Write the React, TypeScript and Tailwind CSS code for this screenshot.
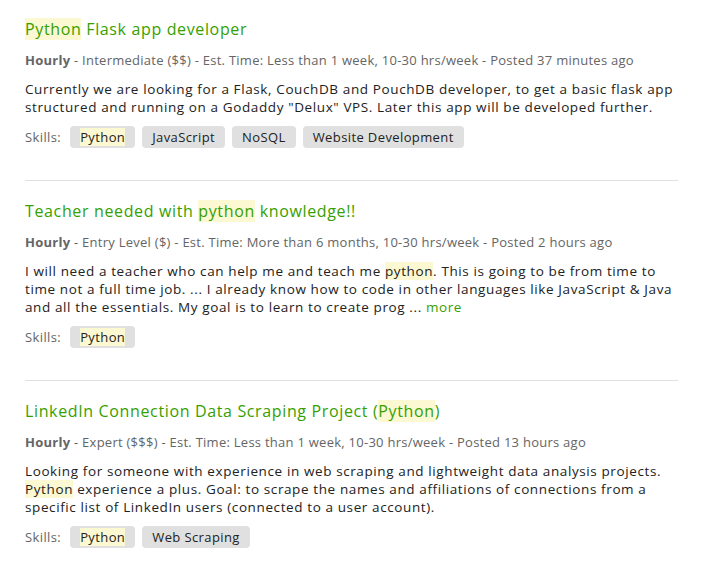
import type { ReactNode } from 'react'

type Job = {
  title: ReactNode
  level: string
  time: string
  posted: string
  body: ReactNode
  skills: { name: string; hit?: boolean }[]
}

function Hl({ children }: { children: ReactNode }) {
  return <span className="bg-[#fbf8d2]">{children}</span>
}

const JOBS: Job[] = [
  {
    title: (
      <>
        <Hl>Python</Hl> Flask app developer
      </>
    ),
    level: 'Intermediate ($$)',
    time: 'Less than 1 week, 10-30 hrs/week',
    posted: '37 minutes ago',
    body: (
      <>
        Currently we are looking for a Flask, CouchDB and PouchDB developer, to get a basic flask app
        <br />
        structured and running on a Godaddy "Delux" VPS. Later this app will be developed further.
      </>
    ),
    skills: [
      { name: 'Python', hit: true },
      { name: 'JavaScript' },
      { name: 'NoSQL' },
      { name: 'Website Development' },
    ],
  },
  {
    title: (
      <>
        Teacher needed with <Hl>python</Hl> knowledge!!
      </>
    ),
    level: 'Entry Level ($)',
    time: 'More than 6 months, 10-30 hrs/week',
    posted: '2 hours ago',
    body: (
      <>
        I will need a teacher who can help me and teach me <Hl>python</Hl>. This is going to be from time to
        <br />
        time not a full time job. ... I already know how to code in other languages like JavaScript &amp; Java
        <br />
        and all the essentials. My goal is to learn to create prog ...{' '}
        <span className="text-[#37a000]">more</span>
      </>
    ),
    skills: [{ name: 'Python', hit: true }],
  },
  {
    title: (
      <>
        LinkedIn Connection Data Scraping Project (<Hl>Python</Hl>)
      </>
    ),
    level: 'Expert ($$$)',
    time: 'Less than 1 week, 10-30 hrs/week',
    posted: '13 hours ago',
    body: (
      <>
        Looking for someone with experience in web scraping and lightweight data analysis projects.
        <br />
        <Hl>Python</Hl> experience a plus. Goal: to scrape the names and affiliations of connections from a
        <br />
        specific list of LinkedIn users (connected to a user account).
      </>
    ),
    skills: [{ name: 'Python', hit: true }, { name: 'Web Scraping' }],
  },
]

function JobRow({ job, last }: { job: Job; last: boolean }) {
  return (
    <section className={`pt-[20px] first:pt-[19px] ${last ? '' : 'border-b border-[#e0e0e0] pb-[32px]'}`}>
      <h2 className="text-[16px] leading-[20px] font-medium tracking-[0.04em] text-[#37a000]">{job.title}</h2>
      <div className="mt-[12px] whitespace-nowrap text-[13px] leading-[18px] tracking-[0.02em] text-[#656565]">
        <b className="font-bold">Hourly</b> - {job.level} - Est. Time: {job.time} - Posted {job.posted}
      </div>
      <p className="mt-[11px] whitespace-nowrap text-[13.5px] leading-[18px] tracking-[0.045em] text-[#222]">
        {job.body}
      </p>
      <div className="mt-[10px] flex items-center gap-[7px] text-[13px] leading-[18px] tracking-[0.03em]">
        <span className="mr-[2px] text-[#656565]">Skills:</span>
        {job.skills.map((s) => (
          <span key={s.name} className="rounded-[4px] bg-[#e0e0e0] px-[10px] py-[2px] text-[#222]">
            {s.hit ? <Hl>{s.name}</Hl> : s.name}
          </span>
        ))}
      </div>
    </section>
  )
}

export default function App() {
  return (
    <div className="min-h-[570px] bg-white pl-[25px] pr-[23px] font-['Open_Sans',sans-serif]">
      {JOBS.map((j, i) => (
        <JobRow key={i} job={j} last={i === JOBS.length - 1} />
      ))}
    </div>
  )
}
